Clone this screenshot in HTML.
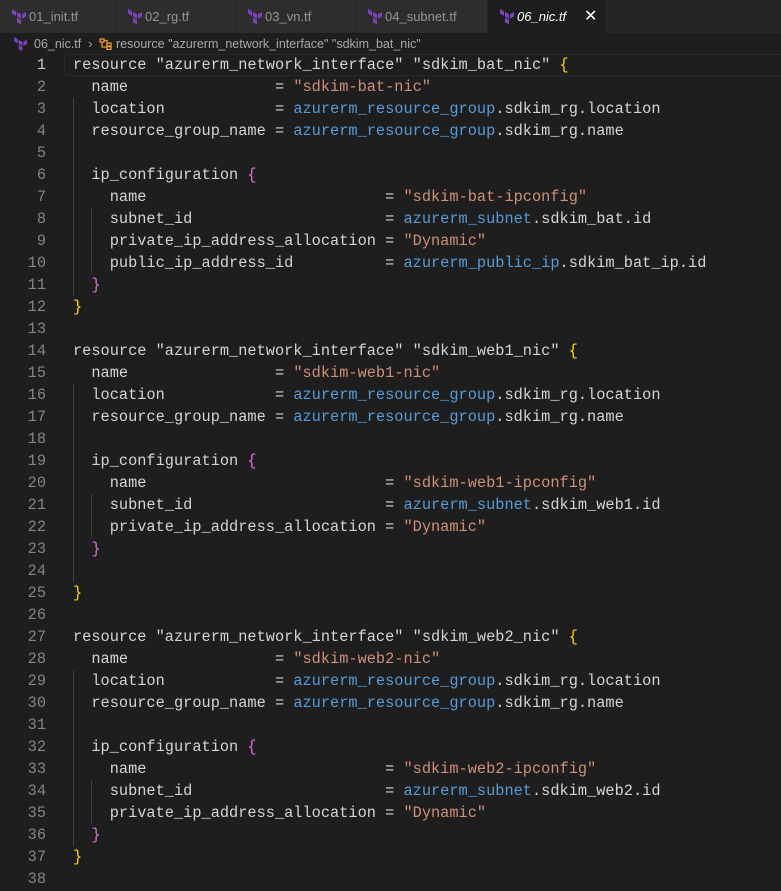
<!DOCTYPE html>
<html><head><meta charset="utf-8"><style>
body{margin:0;width:781px;height:891px;background:#1e1e1e;overflow:hidden;font-family:"Liberation Sans",sans-serif;}
.tabs{position:absolute;left:0;top:0;width:781px;height:33px;background:#252526;}
.tab{position:absolute;top:0;height:33px;background:#2d2d2d;color:#969696;font-size:13px;line-height:33px;border-right:1px solid #252526;box-sizing:border-box;}
.tab.act{background:#1e1e1e;color:#fff;font-style:italic}
.tab svg{position:absolute;left:12px;top:9px}
.tab span{position:absolute;left:29px}
.crumb{position:absolute;top:33px;left:0;width:781px;height:22px;color:#a9a9a9;font-size:12.5px;line-height:22px;}
.code{position:absolute;left:0;top:54px;font-family:"Liberation Mono",monospace;font-size:15.3px;}
.ln{position:absolute;left:0;width:46px;text-align:right;color:#858585;height:22px;line-height:22px;}
.l{position:absolute;left:73px;white-space:pre;color:#d4d4d4;height:22px;line-height:22px;}
.s{color:#ce9178}.b{color:#569cd6}.y{color:#ffd700}.p{color:#da70d6}
.g{position:absolute;width:1px;background:#404040}
</style></head><body>
<div class="tabs">
<div class="tab" style="left:0;width:116px"><svg width="14" height="15" viewBox="0 0 14 15"><path d="M0 0l4 2.3v4.6L0 4.6zM5 2.9l4 2.3v4.6L5 7.5zM10 5.2l4-2.3v4.6l-4 2.3zM5 8.6l4 2.3v4.6L5 13.2z" fill="#7b42bc"/></svg><span>01_init.tf</span></div>
<div class="tab" style="left:116px;width:120px"><svg width="14" height="15" viewBox="0 0 14 15"><path d="M0 0l4 2.3v4.6L0 4.6zM5 2.9l4 2.3v4.6L5 7.5zM10 5.2l4-2.3v4.6l-4 2.3zM5 8.6l4 2.3v4.6L5 13.2z" fill="#7b42bc"/></svg><span>02_rg.tf</span></div>
<div class="tab" style="left:236px;width:120px"><svg width="14" height="15" viewBox="0 0 14 15"><path d="M0 0l4 2.3v4.6L0 4.6zM5 2.9l4 2.3v4.6L5 7.5zM10 5.2l4-2.3v4.6l-4 2.3zM5 8.6l4 2.3v4.6L5 13.2z" fill="#7b42bc"/></svg><span>03_vn.tf</span></div>
<div class="tab" style="left:356px;width:132px"><svg width="14" height="15" viewBox="0 0 14 15"><path d="M0 0l4 2.3v4.6L0 4.6zM5 2.9l4 2.3v4.6L5 7.5zM10 5.2l4-2.3v4.6l-4 2.3zM5 8.6l4 2.3v4.6L5 13.2z" fill="#7b42bc"/></svg><span>04_subnet.tf</span></div>
<div class="tab act" style="left:488px;width:118px"><svg width="14" height="15" viewBox="0 0 14 15"><path d="M0 0l4 2.3v4.6L0 4.6zM5 2.9l4 2.3v4.6L5 7.5zM10 5.2l4-2.3v4.6l-4 2.3zM5 8.6l4 2.3v4.6L5 13.2z" fill="#7b42bc"/></svg><span>06_nic.tf</span><span style="left:96px;font-style:normal;font-size:16px">✕</span></div>
</div>
<div class="crumb"><svg style="position:absolute;left:14px;top:4px" width="13" height="14" viewBox="0 0 14 15"><path d="M0 0l4 2.3v4.6L0 4.6zM5 2.9l4 2.3v4.6L5 7.5zM10 5.2l4-2.3v4.6l-4 2.3zM5 8.6l4 2.3v4.6L5 13.2z" fill="#7b42bc"/></svg><span style="position:absolute;left:34px">06_nic.tf &nbsp;›</span><svg style="position:absolute;left:99px;top:5px" width="14" height="12" viewBox="0 0 14 12"><g fill="none" stroke="#ee9d28" stroke-width="1.3"><rect x="1" y="1" width="4" height="3"/><rect x="8" y="5" width="4" height="3"/><rect x="8" y="8.5" width="4" height="3"/><path d="M3 4v5h5M5 2.5h3v4"/></g></svg><span style="position:absolute;left:116px">resource "azurerm_network_interface" "sdkim_bat_nic"</span></div>
<div style="position:absolute;left:64px;top:54px;width:717px;height:20px;border:1px solid #282828"></div>
<div class="code" id="c"></div>
<div class="g" style="left:73px;top:98px;height:198px"></div>
<div class="g" style="left:91px;top:208px;height:66px"></div>
<div class="g" style="left:73px;top:384px;height:198px"></div>
<div class="g" style="left:91px;top:494px;height:44px"></div>
<div class="g" style="left:73px;top:670px;height:176px"></div>
<div class="g" style="left:91px;top:780px;height:44px"></div>
<script>
var L=[
'resource "azurerm_network_interface" "sdkim_bat_nic" <y>{</y>',
'  name                = <s>"sdkim-bat-nic"</s>',
'  location            = <b>azurerm_resource_group</b>.sdkim_rg.location',
'  resource_group_name = <b>azurerm_resource_group</b>.sdkim_rg.name',
'',
'  ip_configuration <p>{</p>',
'    name                          = <s>"sdkim-bat-ipconfig"</s>',
'    subnet_id                     = <b>azurerm_subnet</b>.sdkim_bat.id',
'    private_ip_address_allocation = <s>"Dynamic"</s>',
'    public_ip_address_id          = <b>azurerm_public_ip</b>.sdkim_bat_ip.id',
'  <p>}</p>',
'<y>}</y>',
'',
'resource "azurerm_network_interface" "sdkim_web1_nic" <y>{</y>',
'  name                = <s>"sdkim-web1-nic"</s>',
'  location            = <b>azurerm_resource_group</b>.sdkim_rg.location',
'  resource_group_name = <b>azurerm_resource_group</b>.sdkim_rg.name',
'',
'  ip_configuration <p>{</p>',
'    name                          = <s>"sdkim-web1-ipconfig"</s>',
'    subnet_id                     = <b>azurerm_subnet</b>.sdkim_web1.id',
'    private_ip_address_allocation = <s>"Dynamic"</s>',
'  <p>}</p>',
'',
'<y>}</y>',
'',
'resource "azurerm_network_interface" "sdkim_web2_nic" <y>{</y>',
'  name                = <s>"sdkim-web2-nic"</s>',
'  location            = <b>azurerm_resource_group</b>.sdkim_rg.location',
'  resource_group_name = <b>azurerm_resource_group</b>.sdkim_rg.name',
'',
'  ip_configuration <p>{</p>',
'    name                          = <s>"sdkim-web2-ipconfig"</s>',
'    subnet_id                     = <b>azurerm_subnet</b>.sdkim_web2.id',
'    private_ip_address_allocation = <s>"Dynamic"</s>',
'  <p>}</p>',
'<y>}</y>',
''];
var h='';
for(var i=0;i<L.length;i++){
var t=L[i].replace(/<(\w)>/g,'<span class="$1">').replace(/<\/\w>/g,'</span>');
h+='<div class="ln" style="top:'+(i*22)+'px'+(i==0?';color:#c6c6c6':'')+'">'+(i+1)+'</div><div class="l" style="top:'+(i*22)+'px">'+t+'</div>';
}
document.getElementById('c').innerHTML=h;
</script>
</body></html>
